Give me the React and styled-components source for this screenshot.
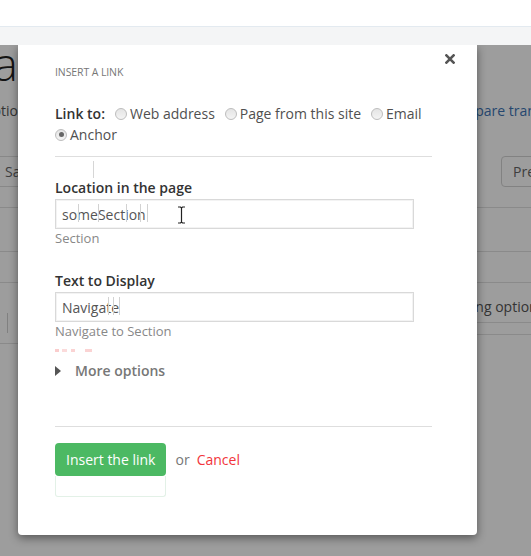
import React from "react";
import styled, { createGlobalStyle } from "styled-components";

const GlobalStyle = createGlobalStyle`
  html, body { margin: 0; padding: 0; }
  body { font-family: "Open Sans", "Liberation Sans", sans-serif; background: #fff; }
  * { box-sizing: border-box; }
`;

const Page = styled.div`
  width: 531px;
  height: 556px;
  overflow: hidden;
  display: flex;
  flex-direction: column;
  background: #fff;
`;

const TopBar = styled.div`
  flex: none;
  height: 27px;
  background: #fff;
  border-bottom: 1px solid #e3eaf0;
`;

const SubBar = styled.div`
  flex: none;
  height: 18px;
  background: #f4f5f6;
`;

const Stage = styled.div`
  position: relative;
  flex: 1;
  overflow: hidden;
  background: #fff;
`;

/* ---------- background page (under the overlay) ---------- */

const BgRow = styled.div`
  display: grid;
  grid-template-columns: 18px 458px 1fr;
  height: ${(p) => p.$h}px;
  font-size: 14px;
  color: #555;
`;

const LeftCell = styled.div`
  grid-column: 1;
  overflow: hidden;
  display: flex;
  justify-content: flex-end;
  white-space: nowrap;
  line-height: ${(p) => p.$lh || 20}px;
  border-bottom: ${(p) => (p.$line ? "1px solid #e0e0e0" : "none")};
`;

const RightCell = styled.div`
  grid-column: 3;
  overflow: hidden;
  white-space: nowrap;
  line-height: ${(p) => p.$lh || 20}px;
  border-bottom: ${(p) => (p.$line ? "1px solid #e0e0e0" : "none")};
`;

const BigTitle = styled.span`
  font-size: 46px;
  font-weight: 300;
  line-height: 36px;
  color: #222;
`;

const BgLink = styled.span`
  display: block;
  color: #3d74b5;
  text-indent: -31px;
`;

const BgText = styled.span`
  display: block;
  color: #555;
  text-indent: ${(p) => p.$indent || 0}px;
  padding-top: ${(p) => p.$pt || 0}px;
`;

const BgButtonLeft = styled.div`
  width: 100%;
  height: 31px;
  border-top: 1px solid #ddd;
  border-bottom: 1px solid #ddd;
  padding-left: 5px;
  line-height: 29px;
  color: #666;
  display: flex;
  justify-content: flex-start;
`;

const BgButtonRight = styled.div`
  margin-left: 25px;
  height: 31px;
  width: 80px;
  border: 1px solid #d4d4d4;
  border-radius: 4px;
  padding-left: 11px;
  line-height: 29px;
  color: #666;
`;

const SplitCol = styled.div`
  grid-column: ${(p) => p.$col};
  display: flex;
  flex-direction: column;
  align-self: start;
`;

const LeftTall = styled.div`
  height: 61px;
  border-bottom: 1px solid #e0e0e0;
  padding: 30px 0 0 7px;
`;

const BgTick = styled.div`
  width: 1px;
  height: 20px;
  background: #d0d0d0;
`;

const RightPart = styled.div`
  height: ${(p) => p.$h}px;
  overflow: hidden;
  white-space: nowrap;
  border-bottom: 1px solid #e0e0e0;
  line-height: 20px;
`;

/* ---------- overlay + modal ---------- */

const Overlay = styled.div`
  position: absolute;
  inset: 0;
  background: rgba(0, 0, 0, 0.385);
  display: flex;
  align-items: flex-start;
  padding-left: 18px;
`;

const Modal = styled.div`
  position: relative;
  width: 459px;
  background: #fff;
  border-radius: 0 0 4px 4px;
  box-shadow: 0 3px 10px rgba(0, 0, 0, 0.45);
  padding: 20px 45px 38px 37px;
  display: flex;
  flex-direction: column;
  color: #444;
`;

const CloseButton = styled.button`
  position: absolute;
  top: 9px;
  right: 22px;
  width: 10px;
  height: 10px;
  padding: 0;
  border: none;
  background: none;
  display: flex;
  cursor: pointer;
`;

const Title = styled.div`
  font-size: 10.5px;
  line-height: 14px;
  color: #777;
  letter-spacing: -0.1px;
  text-transform: uppercase;
`;

const LinkTo = styled.div`
  margin-top: 24px;
  margin-right: -10px;
  display: flex;
  flex-wrap: wrap;
  column-gap: 10px;
  font-size: 14px;
  line-height: 21px;
  color: #505050;
`;

const LinkLabel = styled.span`
  font-weight: 600;
  color: #333;
`;

const Option = styled.label`
  display: inline-flex;
  align-items: center;
  gap: 3px;
`;

const Radio = styled.span`
  position: relative;
  width: 12px;
  height: 12px;
  border-radius: 50%;
  border: 1px solid #bdbdbd;
  background: linear-gradient(#e4e4e4, #f4f4f4);
  flex: none;
  &::after {
    content: "";
    display: ${(p) => (p.$checked ? "block" : "none")};
    position: absolute;
    left: 2.5px;
    top: 2.5px;
    width: 5px;
    height: 5px;
    border-radius: 50%;
    background: #666;
  }
`;

const Rule = styled.div`
  height: 1px;
  background: #dedede;
  margin-top: ${(p) => p.$mt}px;
`;

const Tick = styled.div`
  width: 1px;
  height: 17px;
  background: #d6d6d6;
  margin: 4px 0 0 38px;
`;

const FieldLabel = styled.div`
  font-size: 14px;
  font-weight: 600;
  line-height: 20px;
  color: #333;
  margin-top: ${(p) => p.$mt || 0}px;
`;

const InputBox = styled.div`
  position: relative;
  margin-top: 1px;
  width: 359px;
  height: 30px;
  border: 1px solid #d9d9d9;
  box-shadow: inset 0 0 0 1px #f3f3f3;
  display: flex;
  align-items: center;
  padding: 0 6px;
`;

const Input = styled.input`
  border: none;
  outline: none;
  background: transparent;
  padding: 0;
  width: 100%;
  font-family: inherit;
  font-size: 14px;
  color: #555;
`;

const Glitch = styled.span`
  position: absolute;
  left: ${(p) => p.$x}px;
  top: 4px;
  width: 1px;
  height: 18px;
  background: #d2d2d2;
  pointer-events: none;
`;

const IBeam = styled.svg`
  position: absolute;
  left: 121px;
  top: 6px;
  pointer-events: none;
`;

const Help = styled.div`
  font-size: 13px;
  line-height: 18px;
  color: #888;
`;

/* faint remnants of a hidden red message, as seen in the screenshot */
const ErrorPeek = styled.div`
  margin-top: 9px;
  height: 3px;
  width: 40px;
  background:
    linear-gradient(90deg,
      rgba(240, 110, 110, 0.35) 0 4px, transparent 4px 7px,
      rgba(240, 110, 110, 0.25) 7px 12px, transparent 12px 16px,
      rgba(240, 110, 110, 0.3) 16px 20px, transparent 20px 30px,
      rgba(240, 110, 110, 0.3) 30px 37px, transparent 37px);
`;

const More = styled.div`
  margin-top: 9px;
  display: flex;
  align-items: center;
  font-size: 14px;
  font-weight: 600;
  line-height: 20px;
  color: #777;
`;

const Triangle = styled.span`
  width: 0;
  height: 0;
  border-top: 5px solid transparent;
  border-bottom: 5px solid transparent;
  border-left: 6px solid #555;
  margin-right: 14px;
`;

const Actions = styled.div`
  margin-top: 16px;
  display: flex;
  align-items: flex-start;
  gap: 9px;
  font-size: 14px;
  line-height: 33px;
`;

const ButtonCol = styled.div`
  display: flex;
  flex-direction: column;
`;

const PrimaryButton = styled.button`
  height: 33px;
  padding: 0 11px;
  border: none;
  border-radius: 4px;
  background: #4cb963;
  color: #fff;
  font-family: inherit;
  font-size: 14px;
  cursor: pointer;
`;

const Ghost = styled.div`
  height: 21px;
  border: 1px solid #e3f1e7;
  border-top: none;
  border-radius: 0 0 3px 3px;
`;

const Or = styled.span`
  color: #777;
`;

const CancelLink = styled.a`
  color: #f2353b;
  text-decoration: none;
  cursor: pointer;
  margin-left: -2px;
`;

const options = [
  { label: "Web address" },
  { label: "Page from this site" },
  { label: "Email" },
  { label: "Anchor", checked: true },
];

export default function App() {
  return (
    <>
      <GlobalStyle />
      <Page>
        <TopBar />
        <SubBar />
        <Stage>
          <BgRow $h={50}>
            <LeftCell $lh={36}>
              <BigTitle>Schema</BigTitle>
            </LeftCell>
          </BgRow>
          <BgRow $h={35}>
            <LeftCell $lh={32}>Descriptio</LeftCell>
            <RightCell $lh={32}>
              <BgLink>Compare translations</BgLink>
            </RightCell>
          </BgRow>
          <BgRow $h={26} />
          <BgRow $h={31}>
            <LeftCell>
              <BgButtonLeft>Save</BgButtonLeft>
            </LeftCell>
            <RightCell>
              <BgButtonRight>Preview</BgButtonRight>
            </RightCell>
          </BgRow>
          <BgRow $h={21}>
            <LeftCell $line />
            <RightCell $line />
          </BgRow>
          <BgRow $h={44}>
            <LeftCell $line />
            <RightCell $line />
          </BgRow>
          <BgRow $h={31}>
            <LeftCell $line />
            <RightCell $line />
          </BgRow>
          <BgRow $h={61}>
            <SplitCol $col={1}>
              <LeftTall>
                <BgTick />
              </LeftTall>
            </SplitCol>
            <SplitCol $col={3}>
              <RightPart $h={40}>
                <BgText $indent={-31} $pt={14}>Sorting options</BgText>
              </RightPart>
              <RightPart $h={12} />
            </SplitCol>
          </BgRow>

          <Overlay>
            <Modal role="dialog" aria-label="Insert a link">
              <CloseButton aria-label="Close">
                <svg width="10" height="10" viewBox="0 0 10 10">
                  <path
                    d="M1.4 1.4 L8.6 8.6 M8.6 1.4 L1.4 8.6"
                    stroke="#555"
                    strokeWidth="2.6"
                    strokeLinecap="square"
                    fill="none"
                  />
                </svg>
              </CloseButton>

              <Title>Insert a link</Title>

              <LinkTo>
                <LinkLabel>Link to:</LinkLabel>
                {options.map((o) => (
                  <Option key={o.label}>
                    <Radio $checked={o.checked} />
                    {o.label}
                  </Option>
                ))}
              </LinkTo>

              <Rule $mt={11} />
              <Tick />

              <FieldLabel>Location in the page</FieldLabel>
              <InputBox>
                <Input readOnly value="someSection" />
                {[22, 42, 70, 84, 91].map((x) => (
                  <Glitch key={x} $x={x} />
                ))}
                <IBeam width="9" height="18" viewBox="0 0 9 18">
                  <path
                    d="M1 1 H3.5 L4.5 2 L5.5 1 H8 M4.5 2 V16 M1 17 H3.5 L4.5 16 L5.5 17 H8"
                    stroke="#222"
                    strokeWidth="1.2"
                    fill="none"
                  />
                </IBeam>
              </InputBox>
              <Help>Section</Help>

              <FieldLabel $mt={24}>Text to Display</FieldLabel>
              <InputBox>
                <Input readOnly value="Navigate" />
                {[52, 57, 63].map((x) => (
                  <Glitch key={x} $x={x} />
                ))}
              </InputBox>
              <Help>Navigate to Section</Help>

              <ErrorPeek aria-hidden="true" />

              <More>
                <Triangle />
                More options
              </More>

              <Rule $mt={45} />

              <Actions>
                <ButtonCol>
                  <PrimaryButton>Insert the link</PrimaryButton>
                  <Ghost />
                </ButtonCol>
                <Or>or</Or>
                <CancelLink>Cancel</CancelLink>
              </Actions>
            </Modal>
          </Overlay>
        </Stage>
      </Page>
    </>
  );
}
